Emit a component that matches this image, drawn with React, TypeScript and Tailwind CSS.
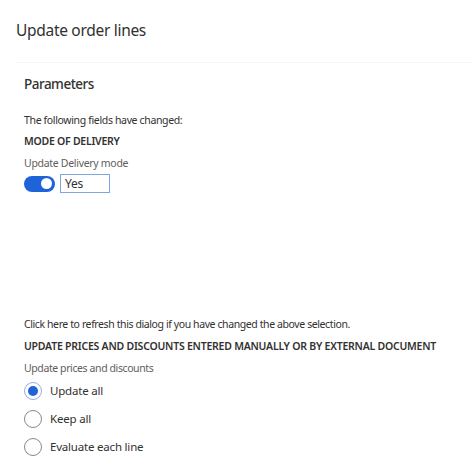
import { useState } from 'react';

const options = ['Update all', 'Keep all', 'Evaluate each line'];

export default function App() {
  const [choice, setChoice] = useState('Update all');
  const [on, setOn] = useState(true);

  return (
    <div
      className="w-[474px] h-[473px] bg-white text-[#323130] overflow-hidden whitespace-nowrap"
      style={{ fontFamily: '"Noto Sans", "Open Sans", sans-serif' }}
    >
      {/* Header */}
      <div className="pl-4 pt-[19px] h-[62px]">
        <h1 className="text-[15.5px] leading-[22px] tracking-[-0.3px]">Update order lines</h1>
      </div>

      <div className="ml-4 mr-[2px] border-t border-[#f5f5f5] pl-2">
        <h2 className="pt-[11px] text-[13.5px] leading-[20px] font-medium tracking-[-0.5px]">Parameters</h2>

        <p className="mt-[18px] text-[10.5px] leading-[16px] tracking-[-0.35px]">
          The following fields have changed:
        </p>
        <p className="mt-[5px] text-[10.5px] leading-[16px] font-semibold tracking-[-0.25px]">MODE OF DELIVERY</p>
        <p className="mt-[6px] text-[10.5px] leading-[16px] text-[#605e5c] tracking-[-0.3px]">Update Delivery mode</p>

        <div className="mt-[3px] flex items-center gap-[5px]">
          <button
            onClick={() => setOn(!on)}
            className={`w-[31px] h-[16px] rounded-full flex items-center px-[3px] ${
              on ? 'bg-[#1f63d8] justify-end' : 'bg-white border border-[#605e5c] justify-start'
            }`}
          >
            <span className="w-[11px] h-[11px] rounded-full bg-white" />
          </button>
          <div className="w-[50px] h-[19px] border border-[#7ea6e0] flex items-center pl-[4px] text-[12px] tracking-[-0.2px]">
            {on ? 'Yes' : 'No'}
          </div>
        </div>

        <p className="mt-[123px] text-[10.5px] leading-[16px] tracking-[-0.4px]">
          Click here to refresh this dialog if you have changed the above selection.
        </p>
        <p className="mt-[6px] text-[10.5px] leading-[16px] font-semibold tracking-[-0.23px]">
          UPDATE PRICES AND DISCOUNTS ENTERED MANUALLY OR BY EXTERNAL DOCUMENT
        </p>
        <p className="mt-[6px] text-[10.5px] leading-[16px] text-[#605e5c] tracking-[-0.4px]">
          Update prices and discounts
        </p>

        <div className="mt-[6px] flex flex-col gap-[10px]">
          {options.map((o) => (
            <label key={o} className="flex items-center gap-[8px] h-[18px] cursor-pointer" onClick={() => setChoice(o)}>
              <span
                className={`w-[18px] h-[18px] rounded-full border flex items-center justify-center ${
                  choice === o ? 'border-[#8fb0e8]' : 'border-[#8a8886]'
                }`}
              >
                {choice === o && <span className="w-[10px] h-[10px] rounded-full bg-[#1f63d8]" />}
              </span>
              <span className="text-[11.5px] tracking-[-0.2px]">{o}</span>
            </label>
          ))}
        </div>
      </div>
    </div>
  );
}
